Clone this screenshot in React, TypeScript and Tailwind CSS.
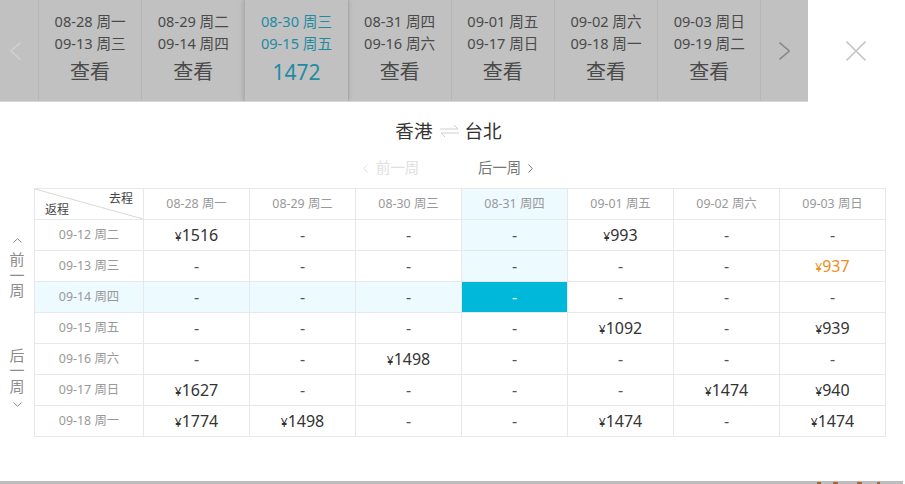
const FONT = "font-['Noto_Sans','Noto_Sans_CJK_SC',sans-serif]";

const TABS = [
  { a: "08-28 周一", b: "09-13 周三", v: "查看" },
  { a: "08-29 周二", b: "09-14 周四", v: "查看" },
  { a: "08-30 周三", b: "09-15 周五", v: "1472", on: true },
  { a: "08-31 周四", b: "09-16 周六", v: "查看" },
  { a: "09-01 周五", b: "09-17 周日", v: "查看" },
  { a: "09-02 周六", b: "09-18 周一", v: "查看" },
  { a: "09-03 周日", b: "09-19 周二", v: "查看" },
];

const HEAD = ["08-28 周一", "08-29 周二", "08-30 周三", "08-31 周四", "09-01 周五", "09-02 周六", "09-03 周日"];

const ROWS = [
  { label: "09-12 周二", cells: ["1516", "", "", "", "993", "", ""] },
  { label: "09-13 周三", cells: ["", "", "", "", "", "", "937"] },
  { label: "09-14 周四", cells: ["", "", "", "", "", "", ""] },
  { label: "09-15 周五", cells: ["", "", "", "", "1092", "", "939"] },
  { label: "09-16 周六", cells: ["", "", "1498", "", "", "", ""] },
  { label: "09-17 周日", cells: ["1627", "", "", "", "", "1474", "940"] },
  { label: "09-18 周一", cells: ["1774", "1498", "", "", "1474", "", "1474"] },
];

function Chevron({ dir, w, h, sw = 1, className }: { dir: "l" | "r" | "u" | "d"; w: number; h: number; sw?: number; className?: string }) {
  const d = {
    l: `M${w - 0.5} 0.5 L0.7 ${h / 2} L${w - 0.5} ${h - 0.5}`,
    r: `M0.5 0.5 L${w - 0.7} ${h / 2} L0.5 ${h - 0.5}`,
    u: `M0.5 ${h - 0.5} L${w / 2} 0.7 L${w - 0.5} ${h - 0.5}`,
    d: `M0.5 0.5 L${w / 2} ${h - 0.7} L${w - 0.5} 0.5`,
  }[dir];
  return (
    <svg width={w} height={h} viewBox={`0 0 ${w} ${h}`} fill="none" stroke="currentColor" strokeWidth={sw} className={className}>
      <path d={d} />
    </svg>
  );
}

function Tab({ a, b, v, on }: { a: string; b: string; v: string; on?: boolean }) {
  return (
    <div
      className={`w-[103.2px] h-full shrink-0 border-l flex flex-col items-center pt-[10px] ${
        on ? "border-[#adadad] text-[#1f8ba3] shadow-[0_0_5px_rgba(0,0,0,0.2)] relative" : "border-[#b6b6b6] text-[#4a4a4a]"
      }`}
    >
      <div className="text-[14.6px] leading-[22px]">{a}</div>
      <div className="text-[14.6px] leading-[22px]">{b}</div>
      <div className={`leading-[30px] mt-[3px] ${on ? "text-[21px]" : "text-[20px]"}`}>{v}</div>
    </div>
  );
}

export default function App() {
  return (
    <div className={`${FONT} relative w-[905px] h-[484px] bg-white overflow-hidden flex flex-col`}>
      <div className="flex h-[102px] shrink-0">
        <div className="flex w-[808px] bg-[#c1c1c1] border-b border-[#d6d6d6] overflow-hidden">
          <div className="w-[38px] flex items-center justify-center pr-[8px] pt-[1px]">
            <Chevron dir="l" w={11} h={18} sw={1.3} className="text-[#d2d2d2]" />
          </div>
          {TABS.map((t) => (
            <Tab key={t.a} {...t} />
          ))}
          <div className="flex-1 border-l border-[#b6b6b6] flex items-center justify-center pr-[1px] pt-[1px]">
            <Chevron dir="r" w={11} h={18} sw={1.6} className="text-[#8a8a8a]" />
          </div>
        </div>
        <div className="flex-1 flex items-center pl-[38px]">
          <svg width="20" height="20" viewBox="0 0 20 20" fill="none" stroke="#c8c8c8" strokeWidth="1.6">
            <path d="M0.5 0.5 L19.5 19.5 M19.5 0.5 L0.5 19.5" />
          </svg>
        </div>
      </div>

      <div className="flex justify-center items-center h-[56px] pr-[8px] pt-[2px] text-[18.6px] text-[#333]">
        <span>香港</span>
        <svg width="19" height="14" viewBox="0 0 19 14" className="ml-[7px] mr-[6px] text-[#cfcfcf]" fill="none" stroke="currentColor">
          <path d="M0 5h18L14 1M19 9H1l4 4" />
        </svg>
        <span>台北</span>
      </div>

      <div className="flex h-[20px] items-center text-[14.4px] pl-[363px]">
        <div className="flex items-center text-[#e0e0e0] w-[115px]">
          <Chevron dir="l" w={5} h={9} className="mr-[8px]" />
          前一周
        </div>
        <div className="flex items-center text-[#777]">
          后一周
          <Chevron dir="r" w={5} h={9} className="ml-[7px]" />
        </div>
      </div>

      <div className="flex mt-[10px]">
        <div className="w-[34px] text-[15px] text-[#8c8c8c] flex flex-col items-center pt-[50px]">
          <Chevron dir="u" w={9} h={5} />
          <div className="leading-[15.5px] mt-[9px] w-[15px] text-center">前一周</div>
          <div className="leading-[15.5px] mt-[49px] w-[15px] text-center">后一周</div>
          <Chevron dir="d" w={9} h={5} className="mt-[8px]" />
        </div>

        <div className="w-[852px] border-t border-l border-[#e6e8ec] grid grid-cols-[109px_repeat(7,106px)] auto-rows-[31px] text-[#999]">
          <div className="relative border-r border-b border-[#e6e8ec] text-[12px] text-[#444]">
            <svg className="absolute inset-0 w-full h-full" viewBox="0 0 108 30" preserveAspectRatio="none">
              <line x1="0" y1="0" x2="108" y2="30" stroke="#d8d8d8" />
            </svg>
            <span className="absolute right-[10px] top-[1px]">去程</span>
            <span className="absolute left-[10px] bottom-[0px]">返程</span>
          </div>
          {HEAD.map((h, i) => (
            <div
              key={h}
              className={`border-r border-b border-[#e6e8ec] flex items-center justify-center text-[12.4px] ${
                i === 3 ? "bg-[#edfaff]" : ""
              }`}
            >
              {h}
            </div>
          ))}
          {ROWS.map((r, ri) => (
            <div key={r.label} className="contents">
              <div
                className={`border-r border-b border-[#e6e8ec] flex items-center justify-center text-[12.4px] ${
                  ri === 2 ? "bg-[#edfaff]" : ""
                }`}
              >
                {r.label}
              </div>
              {r.cells.map((c, ci) => {
                const cross = ri === 2 && ci === 3;
                const hl = (ri === 2 && ci < 3) || (ci === 3 && ri < 2);
                const orange = c === "937";
                return (
                  <div
                    key={ci}
                    className={`border-r border-b border-[#e6e8ec] flex items-center justify-center text-[16px] ${
                      cross ? "bg-[#00b8d9] text-white" : hl ? "bg-[#edfaff] text-[#555]" : orange ? "text-[#ee8e1a]" : c ? "text-[#333]" : "text-[#555]"
                    }`}
                  >
                    {c ? (
                      <span>
                        <span className="text-[12px]">¥</span>
                        {c}
                      </span>
                    ) : (
                      "-"
                    )}
                  </div>
                );
              })}
            </div>
          ))}
        </div>
      </div>

      <div className="mt-auto h-[3px] w-[903px] bg-[#bdbdbd]" />
      <svg className="absolute left-[815px] top-[482px]" width="68" height="2" viewBox="0 0 68 2" fill="#b5622a">
        <rect x="2" y="0" width="4" height="2" />
        <rect x="18" y="0" width="5" height="2" />
        <rect x="42" y="0" width="5" height="2" />
        <rect x="62" y="0" width="3" height="2" />
      </svg>
    </div>
  );
}
